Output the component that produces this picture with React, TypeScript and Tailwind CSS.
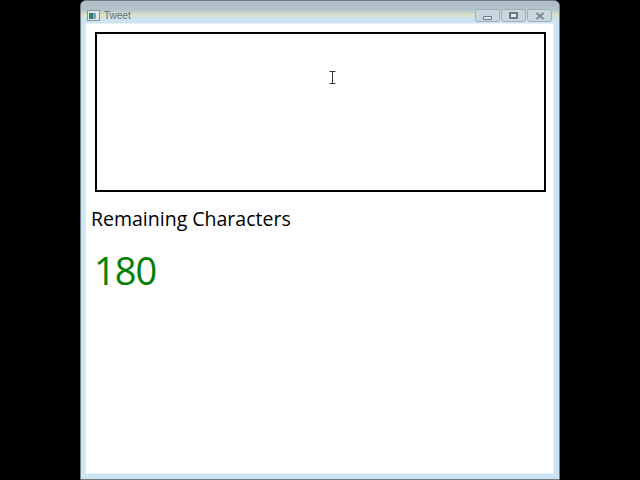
export default function App() {
  return (
    <div className="w-[640px] h-[480px] bg-black flex justify-center overflow-hidden font-['Open_Sans',sans-serif]">
      {/* Window */}
      <div className="w-[480px] h-[480px] flex flex-col border border-[#6f7a82] rounded-t-[6px] bg-[#cfe4f3]">
        {/* Title bar */}
        <div className="h-[22px] shrink-0 flex items-start pt-[8px] pl-[6px] pr-[7px] rounded-t-[5px] bg-[linear-gradient(180deg,#aebfc7_0%,#b3c3ca_40%,#d8e0cb_62%,#cde3ee_82%,#cfe4f3_100%)]">
          <svg width="13" height="11" viewBox="0 0 13 11" className="shrink-0 mt-[1px]">
            <rect x="0.5" y="0.5" width="12" height="10" fill="#e4e8e8" stroke="#8a959b" />
            <rect x="2" y="3" width="4" height="6" fill="#2f7f68" />
            <rect x="6" y="3" width="3" height="6" fill="#7fa6cc" />
          </svg>
          <span className="ml-[4px] mt-[1px] text-[10px] leading-[12px] text-[#5f6f79] font-['Liberation_Sans',sans-serif]">Tweet</span>
          <div className="ml-auto flex gap-[1px]">
            <div className="w-[25px] h-[13px] flex items-center justify-center rounded-[3px] border border-[#9fb0ba] bg-[#c9d8df]">
              <div className="w-[9px] h-[4px] mt-[4px] rounded-[1px] border border-[#6a7880] bg-[#e3ebee]" />
            </div>
            <div className="w-[25px] h-[13px] flex items-center justify-center rounded-[3px] border border-[#9fb0ba] bg-[#c9d8df]">
              <div className="w-[9px] h-[7px] rounded-[1px] border-2 border-[#6a7880] bg-[#e3ebee]" />
            </div>
            <div className="w-[25px] h-[13px] flex items-center justify-center rounded-[3px] border border-[#9fb0ba] bg-[#c9d8df]">
              <svg width="10" height="8" viewBox="0 0 10 8">
                <path d="M1.5 1 L8.5 7 M8.5 1 L1.5 7" stroke="#7b878e" strokeWidth="2" />
              </svg>
            </div>
          </div>
        </div>
        {/* Client area */}
        <div className="flex-1 ml-[4px] mr-[5px] mb-[5px] bg-white border border-[#e8f0f5] pt-[8px] flex flex-col">
          <div className="relative h-[160px] ml-[9px] mr-[7px] border-2 border-black bg-white shrink-0">
            <svg width="7" height="13" viewBox="0 0 7 13" className="absolute left-[232px] top-[37px]">
              <path d="M0.5 0.5 H6.5 M0.5 12.5 H6.5 M3.5 0.5 V12.5" stroke="#333" fill="none" />
            </svg>
          </div>
          <div className="ml-[5px] mt-[14px] text-[19.5px] leading-[26px] text-black">Remaining Characters</div>
          <div className="ml-[8px] mt-[12px] text-[38px] leading-[52px] tracking-[-1px] text-[#008000]">180</div>
        </div>
      </div>
    </div>
  );
}
